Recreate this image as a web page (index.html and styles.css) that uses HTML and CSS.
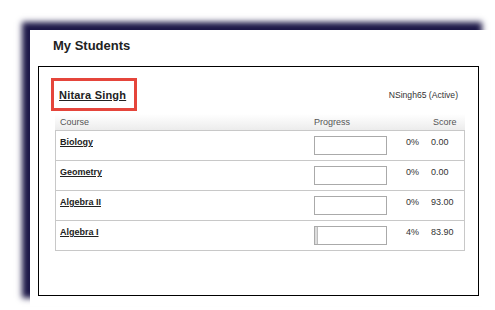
FILE: index.html
```html
<!DOCTYPE html>
<html>
<head>
<meta charset="utf-8">
<link rel="stylesheet" href="styles.css">
</head>
<body>
<div class="window">
  <h1 class="title">My Students</h1>
  <div class="card">
    <div class="card-head">
      <div class="highlight"><a class="student" href="#">Nitara Singh</a></div>
      <div class="status">NSingh65 (Active)</div>
    </div>
    <div class="table">
      <div class="thead">
        <div class="c-course">Course</div>
        <div class="c-prog">Progress</div>
        <div class="c-pct"></div>
        <div class="c-score">Score</div>
      </div>
      <div class="tbody">
        <div class="row">
          <div class="c-course"><a href="#">Biology</a></div>
          <div class="c-prog"><div class="bar"><div class="fill" style="width:0%"></div></div></div>
          <div class="c-pct">0%</div>
          <div class="c-score">0.00</div>
        </div>
        <div class="row">
          <div class="c-course"><a href="#">Geometry</a></div>
          <div class="c-prog"><div class="bar"><div class="fill" style="width:0%"></div></div></div>
          <div class="c-pct">0%</div>
          <div class="c-score">0.00</div>
        </div>
        <div class="row">
          <div class="c-course"><a href="#">Algebra II</a></div>
          <div class="c-prog"><div class="bar"><div class="fill" style="width:0%"></div></div></div>
          <div class="c-pct">0%</div>
          <div class="c-score">93.00</div>
        </div>
        <div class="row">
          <div class="c-course"><a href="#">Algebra I</a></div>
          <div class="c-prog"><div class="bar"><div class="fill" style="width:4%"></div></div></div>
          <div class="c-pct">4%</div>
          <div class="c-score">83.90</div>
        </div>
      </div>
    </div>
  </div>
</div>
</body>
</html>
```

FILE: styles.css
```css
html, body {
  margin: 0;
  padding: 0;
  background: #fff;
}
body {
  font-family: "Liberation Sans", Arial, sans-serif;
  color: #222;
  overflow: hidden;
  height: 310px;
}
.window {
  margin: 30px 0 0 30px;
  width: 460px;
  height: 276px;
  background: #fff;
  box-shadow: -8px -8px 6px #1d1848;
  box-sizing: border-box;
  padding-top: 8px;
}
.title {
  margin: 0;
  padding-left: 23px;
  font-size: 13px;
  font-weight: bold;
  line-height: 16px;
  color: #222;
}
.card {
  margin: 12px 0 0 8px;
  width: 441px;
  height: 230px;
  box-sizing: border-box;
  border: 1px solid #000;
}
.card-head {
  display: flex;
  align-items: center;
  justify-content: space-between;
  padding: 11px 20px 0 12px;
}
.highlight {
  width: 86px;
  height: 33px;
  box-sizing: border-box;
  border: 3px solid #e5453b;
  display: flex;
  align-items: center;
  padding-left: 5px;
}
.student {
  font-size: 11px;
  font-weight: bold;
  color: #222;
  letter-spacing: 0.2px;
  text-decoration: underline;
}
.status {
  font-size: 8.6px;
  color: #333;
  padding-top: 1px;
}
.table {
  margin: 3px 0 0 16px;
  width: 410px;
}
.thead, .row {
  display: grid;
  grid-template-columns: 258px 73px 32px 33px;
  column-gap: 0;
}
.thead {
  height: 16px;
  align-items: center;
  padding-left: 1px;
  font-size: 9px;
  color: #555;
  background: linear-gradient(#ffffff, #ececec);
}
.thead .c-course {
  padding-left: 4px;
}
.thead .c-score {
  padding-left: 14px;
}
.tbody {
  border: 1px solid #c8c8c8;
}
.row {
  height: 29px;
  border-bottom: 1px solid #c8c8c8;
  font-size: 9px;
  color: #333;
}
.row:last-child {
  border-bottom: none;
}
.row .c-course {
  padding: 6px 0 0 4px;
  line-height: 11px;
}
.row a {
  font-weight: bold;
  color: #222;
  text-decoration: underline;
}
.row .c-prog {
  padding-top: 5px;
}
.bar {
  width: 73px;
  height: 19px;
  box-sizing: border-box;
  border: 1px solid #aaa;
  background: #fff;
  display: flex;
}
.fill {
  height: 100%;
  background: #dcdcdc;
  box-shadow: inset -1px 0 0 #bdbdbd;
}
.row .c-pct {
  text-align: right;
  padding-top: 6px;
  line-height: 11px;
}
.row .c-score {
  padding: 6px 0 0 12px;
  line-height: 11px;
}
```
